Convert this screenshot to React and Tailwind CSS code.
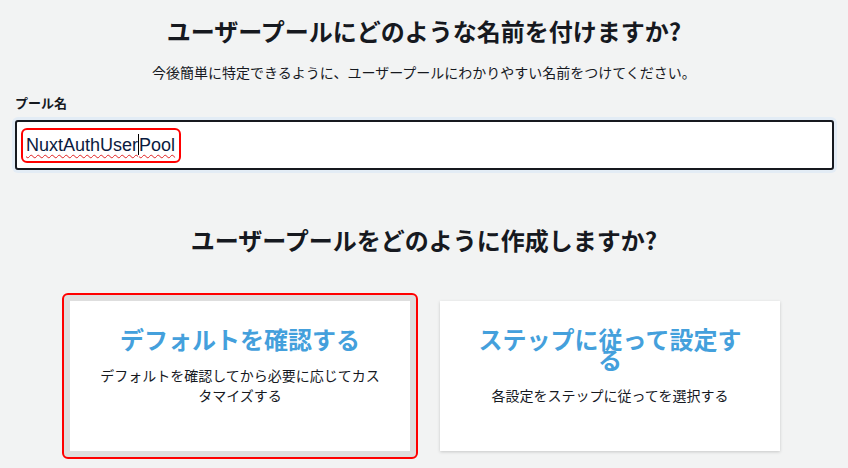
import React from "react";

const jp = { fontFamily: '"Noto Sans CJK JP", "Noto Sans", sans-serif' };

export default function App() {
  return (
    <div className="w-[848px] h-[468px] overflow-hidden bg-[#f2f3f3] text-[#16191f]" style={jp}>
      <h1 className="pt-[15px] text-center text-[24px] leading-[32px] font-bold">
        ユーザープールにどのような名前を付けますか?
      </h1>
      <p className="mt-[15px] text-center text-[14px] leading-[20px] text-[#16191f]">
        今後簡単に特定できるように、ユーザープールにわかりやすい名前をつけてください。
      </p>
      <div className="px-[15px] mt-[12px]">
        <div className="text-[13px] leading-[18px] font-bold">プール名</div>
        <div className="mt-[8px] h-[50px] w-[819px] bg-white border-2 border-[#16191f] rounded-[3px] shadow-[0_0_0_3px_#e3ecf5] flex items-center pl-[4px]">
          <div className="h-[35px] w-[160px] border-2 border-[#ff0000] rounded-[6px] flex items-center pl-[3px]">
            <span
              className="text-[18px] leading-[22px] text-[#0a1a40] underline decoration-wavy decoration-[#e02020] decoration-1 underline-offset-[3px]"
              style={{ fontFamily: '"Liberation Sans", Arial, sans-serif' }}
            >
              NuxtAuthUser
              <span className="inline-block w-px h-[21px] bg-black align-[-4px]"></span>
              Pool
            </span>
          </div>
        </div>
      </div>
      <h2 className="mt-[54px] text-center text-[24px] leading-[32px] font-bold">
        ユーザープールをどのように作成しますか?
      </h2>
      <div className="mt-[45px] pl-[70px] flex gap-[30px]">
        <div className="-m-[8px] border-2 border-[#ff0000] rounded-[6px] bg-[#dedede] p-[6px]">
          <div className="w-[340px] h-[150px] bg-white px-[28px] pt-[28px] text-center">
            <div className="text-[24px] leading-[20px] font-bold text-[#44a0dc]">デフォルトを確認する</div>
            <div className="mt-[16px] text-[14px] leading-[20px] text-[#16191f]">
              デフォルトを確認してから必要に応じてカスタマイズする
            </div>
          </div>
        </div>
        <div className="w-[340px] h-[150px] bg-white px-[28px] pt-[28px] text-center shadow-[0_1px_3px_rgba(0,0,0,0.18)]">
          <div className="text-[24px] leading-[20px] font-bold text-[#44a0dc]">ステップに従って設定する</div>
          <div className="mt-[16px] text-[14px] leading-[20px] text-[#16191f]">
            各設定をステップに従ってを選択する
          </div>
        </div>
      </div>
    </div>
  );
}
